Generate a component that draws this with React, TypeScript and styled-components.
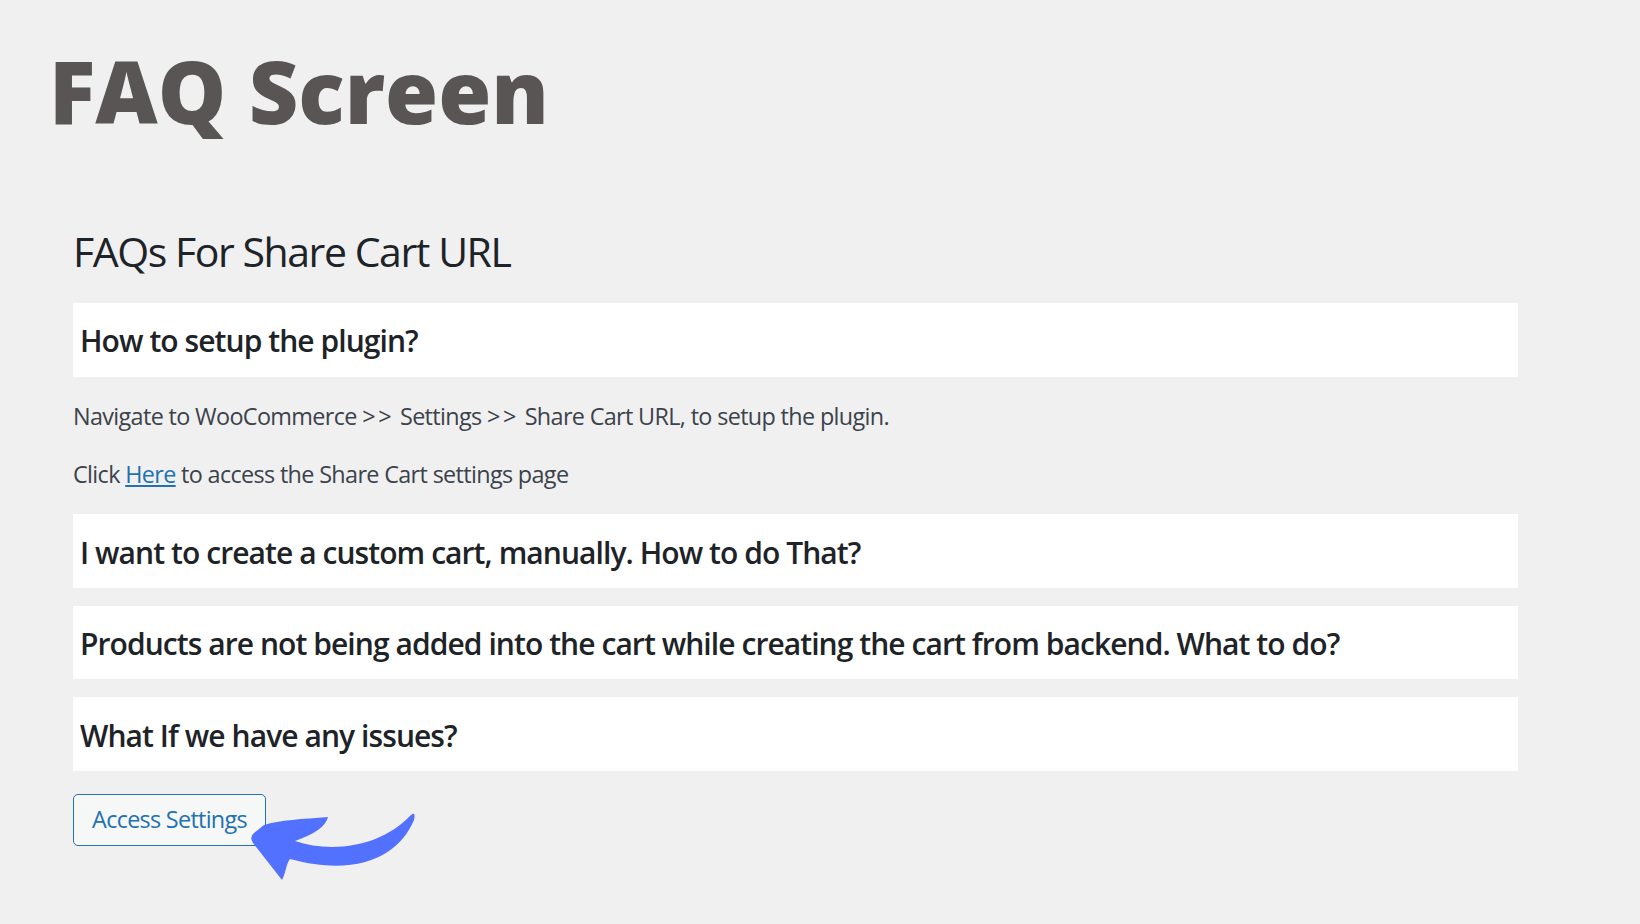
import styled, { createGlobalStyle } from 'styled-components';

const GlobalStyle = createGlobalStyle`
  html, body {
    margin: 0;
    padding: 0;
    background: #f0f0f1;
  }
  body {
    font-family: "Open Sans", "Noto Sans", "Liberation Sans", sans-serif;
  }
`;

const Page = styled.div`
  min-height: 924px;
  box-sizing: border-box;
  padding: 48px 122px 0 49px;
`;

const Title = styled.h1`
  margin: 0;
  font-size: 86px;
  line-height: 1;
  font-weight: 800;
  color: #595554;
`;

const Section = styled.section`
  margin: 97px 0 0 24px;
  display: flex;
  flex-direction: column;
  align-items: flex-start;
`;

const SectionTitle = styled.h2`
  margin: 0 0 31px;
  font-size: 41px;
  line-height: 1;
  font-weight: 400;
  letter-spacing: -0.035em;
  color: #1d2327;
`;

const Question = styled.div`
  align-self: stretch;
  box-sizing: border-box;
  height: 73.5px;
  display: flex;
  align-items: center;
  padding: 2px 7px 0;
  background: #ffffff;
  font-size: 30px;
  font-weight: 600;
  letter-spacing: -0.031em;
  color: #1d2327;
  margin-bottom: 18px;
`;

const Answer = styled.div`
  margin: 10px 0 28px;
  display: flex;
  flex-direction: column;
  gap: 35px;
`;

const Text = styled.p`
  margin: 0;
  font-size: 23.4px;
  line-height: 1;
  letter-spacing: -0.028em;
  color: #3c434a;
`;

const Chevrons = styled.span`
  letter-spacing: 0.12em;
`;

const Link = styled.a`
  color: #2271b1;
  text-decoration: underline;
`;

const ButtonWrap = styled.div`
  position: relative;
  margin-top: 5px;
`;

const Button = styled.button`
  box-sizing: border-box;
  width: 193px;
  height: 52px;
  padding: 0 0 2px;
  background: #f6f7f7;
  border: 1.5px solid #2271b1;
  border-radius: 5px;
  color: #2271b1;
  font-family: inherit;
  font-size: 23.4px;
  letter-spacing: -0.03em;
  cursor: pointer;
`;

const Arrow = styled.svg`
  position: absolute;
  left: 167px;
  top: 2px;
  width: 190px;
  height: 95px;
  overflow: visible;
`;

const faqs = [
  'How to setup the plugin?',
  'I want to create a custom cart, manually. How to do That?',
  'Products are not being added into the cart while creating the cart from backend. What to do?',
  'What If we have any issues?',
];

function App() {
  return (
    <Page>
      <GlobalStyle />
      <Title>FAQ Screen</Title>
      <Section>
        <SectionTitle>FAQs For Share Cart URL</SectionTitle>
        <Question>{faqs[0]}</Question>
        <Answer>
          <Text>
            Navigate to WooCommerce <Chevrons>&gt;&gt;</Chevrons> Settings <Chevrons>&gt;&gt;</Chevrons> Share
            Cart URL, to setup the plugin.
          </Text>
          <Text>
            Click <Link href="#">Here</Link> to access the Share Cart settings page
          </Text>
        </Answer>
        {faqs.slice(1).map((q) => (
          <Question key={q}>{q}</Question>
        ))}
        <ButtonWrap>
          <Button>Access Settings</Button>
          <Arrow viewBox="0 0 190 95">
            <path
              fill="#5271ff"
              d="M 13 47 Q 9 41 14 37 L 24 29 C 40 24 62 23 88 21 C 86 30 75 38 55 45 C 90 57 140 52 171 19 Q 176 15 174 24 C 160 58 120 82 50 63 C 46 68 46 76 42 84 L 13 47 Z"
            />
          </Arrow>
        </ButtonWrap>
      </Section>
    </Page>
  );
}

export default App;
